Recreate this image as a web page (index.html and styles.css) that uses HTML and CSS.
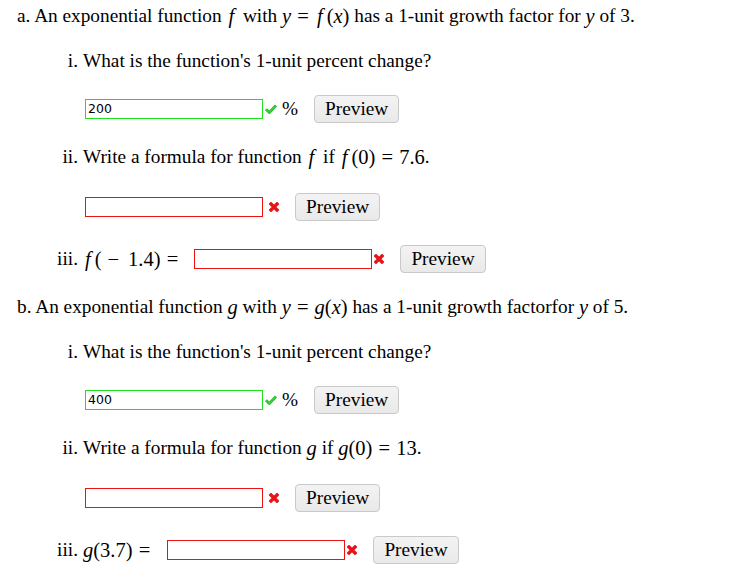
FILE: index.html
```html
<!DOCTYPE html>
<html>
<head>
<meta charset="utf-8">
<link rel="stylesheet" href="styles.css">
</head>
<body>
<div class="page">
  <div class="row head">a. An exponential function&nbsp;<span class="math"><i class="fv">f</i></span>&nbsp;with&nbsp;<span class="math"><i>y</i><span class="rel">=</span><i class="fv">f</i>(<i>x</i>)</span>&nbsp;has a 1-unit growth factor for&nbsp;<span class="math"><i>y</i></span>&nbsp;of 3.</div>

  <div class="row sub s-i"><span class="num">i.</span>What is the function's 1-unit percent change?</div>
  <div class="row ans">
    <span class="field ok">200</span>
    <svg class="icon check" width="12" height="10" viewBox="0 0 12 10"><path d="M1 5.2 L4.3 8.4 L11 1.6" fill="none" stroke="#22b022" stroke-width="2.8" stroke-linejoin="round"/><path d="M1 5.2 L4.3 8.4 L11 1.6" fill="none" stroke="#3fd33f" stroke-width="1.4" stroke-linejoin="round"/></svg>
    <span class="pct">%</span>
    <button class="btn">Preview</button>
  </div>

  <div class="row sub s-ii"><span class="num">ii.</span>Write a formula for function&nbsp;<span class="math"><i class="fv">f</i></span>&nbsp;if&nbsp;<span class="math"><i class="fv">f</i>(0)<span class="rel">=</span>7.6</span>.</div>
  <div class="row ans ans-ii">
    <span class="field bad"></span>
    <svg class="icon cross spaced" width="10" height="10" viewBox="0 0 10 10"><path d="M2 2 L8 8 M8 2 L2 8" stroke="#e8141a" stroke-width="3.4" stroke-linecap="square"/></svg>
    <button class="btn">Preview</button>
  </div>

  <div class="row sub s-iii"><span class="num">iii.</span><span class="math"><i class="fv">f</i>(<span class="minus">−</span>1.4)<span class="rel">=</span></span><span class="field bad inline-a"></span>
    <svg class="icon cross tight" width="10" height="10" viewBox="0 0 10 10"><path d="M2 2 L8 8 M8 2 L2 8" stroke="#e8141a" stroke-width="3.4" stroke-linecap="square"/></svg>
    <button class="btn">Preview</button>
  </div>

  <div class="row head head-b">b. An exponential function&nbsp;<span class="math"><i>g</i></span>&nbsp;with&nbsp;<span class="math"><i>y</i><span class="rel">=</span><i>g</i>(<i>x</i>)</span>&nbsp;has a 1-unit growth factorfor&nbsp;<span class="math"><i>y</i></span>&nbsp;of 5.</div>

  <div class="row sub s-i"><span class="num">i.</span>What is the function's 1-unit percent change?</div>
  <div class="row ans">
    <span class="field ok">400</span>
    <svg class="icon check" width="12" height="10" viewBox="0 0 12 10"><path d="M1 5.2 L4.3 8.4 L11 1.6" fill="none" stroke="#22b022" stroke-width="2.8" stroke-linejoin="round"/><path d="M1 5.2 L4.3 8.4 L11 1.6" fill="none" stroke="#3fd33f" stroke-width="1.4" stroke-linejoin="round"/></svg>
    <span class="pct">%</span>
    <button class="btn">Preview</button>
  </div>

  <div class="row sub s-ii"><span class="num">ii.</span>Write a formula for function&nbsp;<span class="math"><i>g</i></span>&nbsp;if&nbsp;<span class="math"><i>g</i>(0)<span class="rel">=</span>13</span>.</div>
  <div class="row ans ans-ii">
    <span class="field bad"></span>
    <svg class="icon cross spaced" width="10" height="10" viewBox="0 0 10 10"><path d="M2 2 L8 8 M8 2 L2 8" stroke="#e8141a" stroke-width="3.4" stroke-linecap="square"/></svg>
    <button class="btn">Preview</button>
  </div>

  <div class="row sub s-iii"><span class="num">iii.</span><span class="math"><i>g</i>(3.7)<span class="rel">=</span></span><span class="field bad inline-b"></span>
    <svg class="icon cross tight" width="10" height="10" viewBox="0 0 10 10"><path d="M2 2 L8 8 M8 2 L2 8" stroke="#e8141a" stroke-width="3.4" stroke-linecap="square"/></svg>
    <button class="btn">Preview</button>
  </div>
</div>
</body>
</html>
```
FILE: styles.css
```css
html, body {
  margin: 0;
  padding: 0;
  background: #ffffff;
}
.page {
  padding: 1px 0 0 17px;
  font-family: "Liberation Serif", "Times New Roman", serif;
  font-size: 19.3px;
  color: #000;
}
.row {
  display: flex;
  align-items: center;
  height: 30px;
  white-space: nowrap;
}
.math {
  font-size: 20.5px;
  font-family: "Liberation Serif", serif;
}
.math i {
  font-style: italic;
}
.math .fv {
  margin: 0 4px 0 2px;
}
.minus {
  margin: 0 9px 0 6px;
}
.rel {
  margin: 0 0.3em;
}
.num {
  display: inline-block;
  width: 61px;
  text-align: right;
  margin-right: 5px;
}
.s-i { margin-top: 15px; }
.s-ii { margin-top: 18px; }
.s-iii { margin-top: 22px; }
.ans { margin-top: 18px; padding-left: 68px; }
.ans.ans-ii { margin-top: 20px; }
.head-b { margin-top: 18px; }

.field {
  box-sizing: border-box;
  display: inline-block;
  width: 178px;
  height: 20px;
  border: 1px solid #e00;
  font-family: "DejaVu Sans", sans-serif;
  font-size: 12.5px;
  line-height: 18px;
  padding-left: 2px;
  background: #fff;
}
.field.ok { border-color: #1ee01e; }
.field.bad { border-color: #ee1111; }
.inline-a { margin-left: 10px; }
.inline-b { margin-left: 11px; }

.icon { display: block; flex: none; }
.check { margin-left: 2px; }
.pct { margin-left: 5px; }
.cross.spaced { margin-left: 6px; }
.cross.tight { margin-left: 2px; }

.btn {
  font-family: "Liberation Serif", "Times New Roman", serif;
  font-size: 19.3px;
  height: 28px;
  padding: 0 10px;
  border: 1px solid #c9c9c9;
  border-radius: 4px;
  background: linear-gradient(#f3f3f3, #e9e9e9);
  color: #000;
  margin-left: 16px;
}
.ans .pct + .btn { margin-left: 16px; }
```
